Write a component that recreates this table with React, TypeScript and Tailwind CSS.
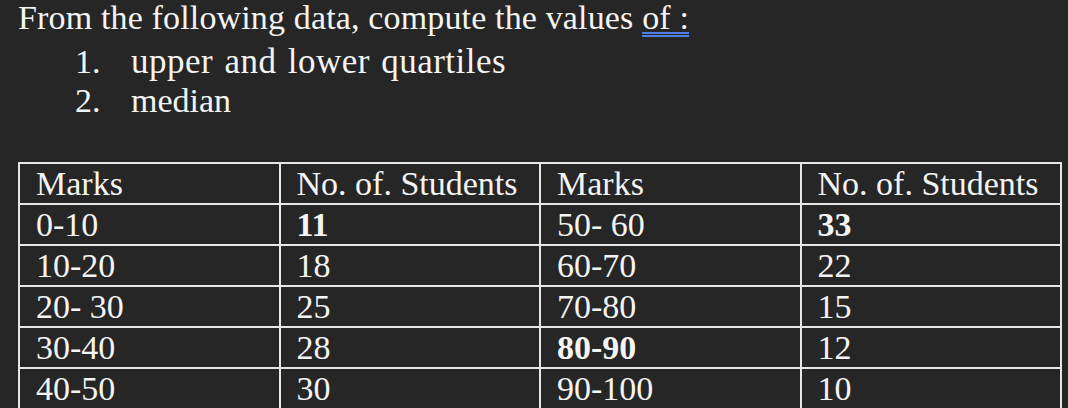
import React from 'react';

const rows: [string, string, string, string][] = [
  ['0-10', '11', '50- 60', '33'],
  ['10-20', '18', '60-70', '22'],
  ['20- 30', '25', '70-80', '15'],
  ['30-40', '28', '80-90', '12'],
  ['40-50', '30', '90-100', '10'],
];

// cells shown in bold in the source document
const bold = new Set(['11', '33', '80-90']);

const Cell = ({ children }: { children: React.ReactNode }) => (
  <td className="border-2 border-[#e6e6e6] pl-4 pt-px leading-[38px] align-top">{children}</td>
);

export default function App() {
  return (
    <div
      className="w-[1068px] h-[408px] overflow-hidden bg-[#262626] text-[#f4f4f4]"
      style={{ fontFamily: '"Liberation Serif", "Times New Roman", serif' }}
    >
      <div className="pl-[18px] text-[34px] leading-[36px] tracking-[0.15px]">
        From the following data, compute the values{' '}
        <span className="underline decoration-double decoration-2 decoration-[#4f7fe8] underline-offset-[3px]">of :</span>
      </div>

      <ol className="mt-[6px] text-[34px] leading-[39px]">
        <li className="flex">
          <span className="w-[131px] pl-[75px]">1.</span>
          <span className="text-[35px] tracking-[0.5px] [word-spacing:2px]">upper and lower quartiles</span>
        </li>
        <li className="flex">
          <span className="w-[131px] pl-[75px]">2.</span>
          <span>median</span>
        </li>
      </ol>

      <table className="ml-[18px] mt-[42px] w-[1044px] table-fixed border-collapse text-[34px]">
        <thead>
          <tr>
            <Cell>Marks</Cell>
            <Cell>No. of. Students</Cell>
            <Cell>Marks</Cell>
            <Cell>No. of. Students</Cell>
          </tr>
        </thead>
        <tbody>
          {rows.map((r) => (
            <tr key={r[0]}>
              {r.map((v, i) => (
                <Cell key={i}>{bold.has(v) ? <b>{v}</b> : v}</Cell>
              ))}
            </tr>
          ))}
        </tbody>
      </table>
    </div>
  );
}
